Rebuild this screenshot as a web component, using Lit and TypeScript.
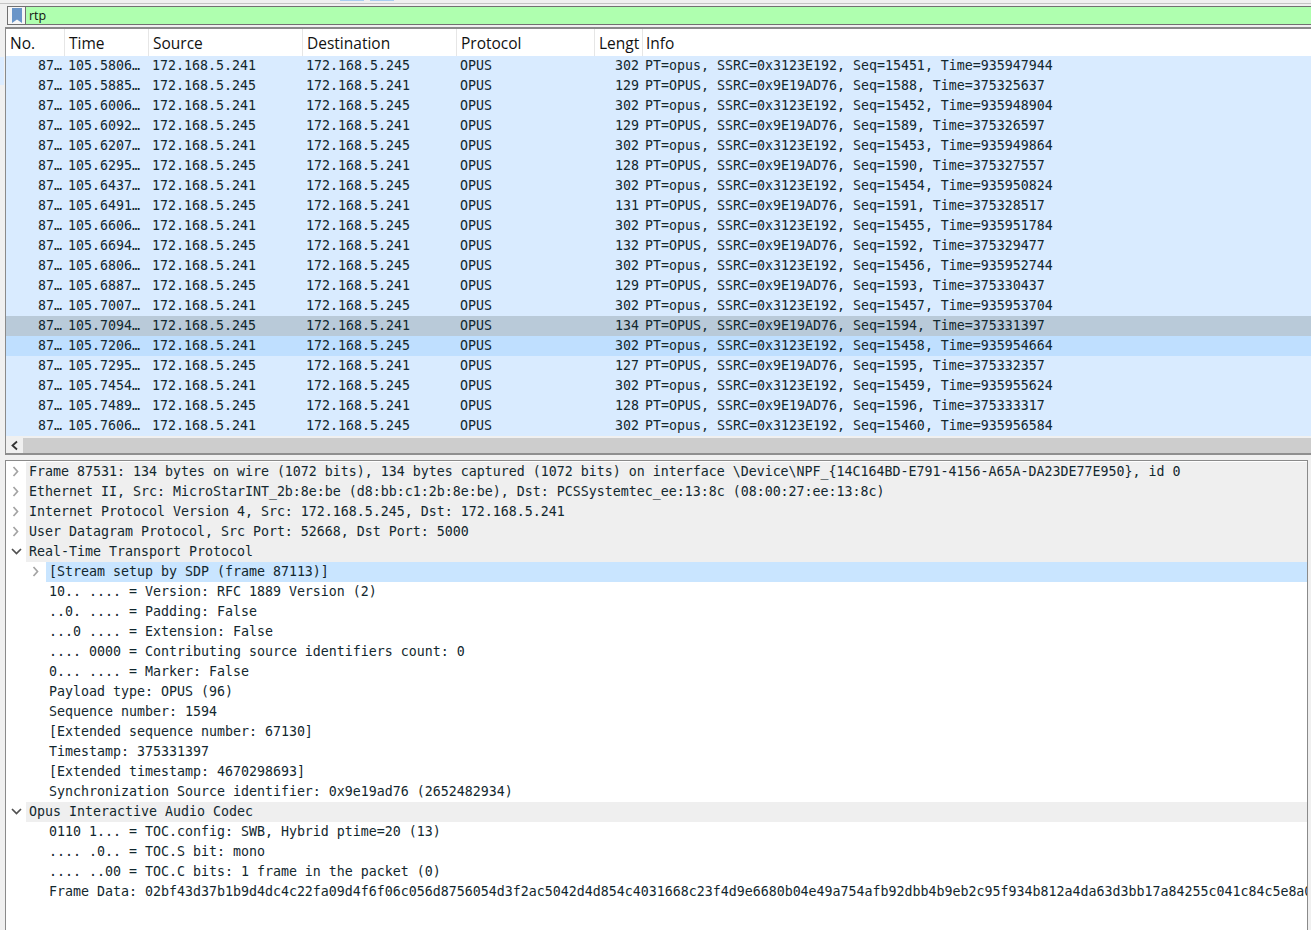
import { LitElement, html, css, svg } from "lit";
import { customElement } from "lit/decorators.js";

const A = ["172.168.5.241", "172.168.5.245"];
const rows: [string, number, number, number][] = [
  ["105.5806…", 302, 15451, 935947944],
  ["105.5885…", 129, 1588, 375325637],
  ["105.6006…", 302, 15452, 935948904],
  ["105.6092…", 129, 1589, 375326597],
  ["105.6207…", 302, 15453, 935949864],
  ["105.6295…", 128, 1590, 375327557],
  ["105.6437…", 302, 15454, 935950824],
  ["105.6491…", 131, 1591, 375328517],
  ["105.6606…", 302, 15455, 935951784],
  ["105.6694…", 132, 1592, 375329477],
  ["105.6806…", 302, 15456, 935952744],
  ["105.6887…", 129, 1593, 375330437],
  ["105.7007…", 302, 15457, 935953704],
  ["105.7094…", 134, 1594, 375331397],
  ["105.7206…", 302, 15458, 935954664],
  ["105.7295…", 127, 1595, 375332357],
  ["105.7454…", 302, 15459, 935955624],
  ["105.7489…", 128, 1596, 375333317],
  ["105.7606…", 302, 15460, 935956584],
];

type D = { t: string; k: "closed" | "open" | "subsel" | "plain" };
const details: D[] = [
  { t: "Frame 87531: 134 bytes on wire (1072 bits), 134 bytes captured (1072 bits) on interface \\Device\\NPF_{14C164BD-E791-4156-A65A-DA23DE77E950}, id 0", k: "closed" },
  { t: "Ethernet II, Src: MicroStarINT_2b:8e:be (d8:bb:c1:2b:8e:be), Dst: PCSSystemtec_ee:13:8c (08:00:27:ee:13:8c)", k: "closed" },
  { t: "Internet Protocol Version 4, Src: 172.168.5.245, Dst: 172.168.5.241", k: "closed" },
  { t: "User Datagram Protocol, Src Port: 52668, Dst Port: 5000", k: "closed" },
  { t: "Real-Time Transport Protocol", k: "open" },
  { t: "[Stream setup by SDP (frame 87113)]", k: "subsel" },
  { t: "10.. .... = Version: RFC 1889 Version (2)", k: "plain" },
  { t: "..0. .... = Padding: False", k: "plain" },
  { t: "...0 .... = Extension: False", k: "plain" },
  { t: ".... 0000 = Contributing source identifiers count: 0", k: "plain" },
  { t: "0... .... = Marker: False", k: "plain" },
  { t: "Payload type: OPUS (96)", k: "plain" },
  { t: "Sequence number: 1594", k: "plain" },
  { t: "[Extended sequence number: 67130]", k: "plain" },
  { t: "Timestamp: 375331397", k: "plain" },
  { t: "[Extended timestamp: 4670298693]", k: "plain" },
  { t: "Synchronization Source identifier: 0x9e19ad76 (2652482934)", k: "plain" },
  { t: "Opus Interactive Audio Codec", k: "open" },
  { t: "0110 1... = TOC.config: SWB, Hybrid ptime=20 (13)", k: "plain" },
  { t: ".... .0.. = TOC.S bit: mono", k: "plain" },
  { t: ".... ..00 = TOC.C bits: 1 frame in the packet (0)", k: "plain" },
  { t: "Frame Data: 02bf43d37b1b9d4dc4c22fa09d4f6f06c056d8756054d3f2ac5042d4d854c4031668c23f4d9e6680b04e49a754afb92dbb4b9eb2c95f934b812a4da63d3bb17a84255c041c84c5e8a0", k: "plain" },
];

const right = svg`<path d="M3.5 1 L7.5 5.5 L3.5 10" fill="none" stroke="#a4a4a4" stroke-width="1.7"/>`;
const down = svg`<path d="M1 3 L5.5 7.5 L10 3" fill="none" stroke="#505050" stroke-width="1.7"/>`;

@customElement("app-root")
export class AppRoot extends LitElement {
  static styles = css`
    :host { display: block; width: 1311px; height: 930px; overflow: hidden; background: #f0f0f0; position: relative; font-family: "DejaVu Sans Mono", "Liberation Mono", monospace; color: #1a1a1a; }
    .strip { height: 3px; display: flex; gap: 6px; padding-left: 340px; border-bottom: 1px solid #c4c4c4; }
    .strip i { width: 24px; height: 1px; background: #a8cdf0; }
    .edge { position: absolute; left: 0; top: 57px; width: 4px; height: 28px; background: #dcecff; }
    .filter { height: 17px; margin: 2px 0 0 7px; border: 1px solid #707070; border-width: 1px 0 1px 1px; background: #afffaf; display: flex; align-items: center; }
    .mark { width: 18px; height: 17px; background: #f6f6f6; border-right: 1px solid #707070; display: flex; align-items: center; justify-content: center; box-sizing: border-box; }
    .filter span { font: 12.5px "Open Sans", sans-serif; padding-left: 3px; color: #111; }
    .list { margin: 2px 0 0 5px; border-top: 2px solid #8a8a8a; border-left: 1px solid #8a8a8a; }
    .cols { display: grid; grid-template-columns: 58px 84px 154px 154px 138px 48px 1fr; }
    .head { height: 27px; background: #fff; font: 15.5px "Open Sans", sans-serif; color: #111; }
    .head div { padding: 3px 0 0 4px; line-height: 22px; height: 27px; border-left: 1px solid #e6e6e6; box-sizing: border-box; overflow: hidden; white-space: nowrap; }
    .head div:first-child { border-left: 0; }
    .head div:last-child { padding-left: 3px; }
    .row { height: 20px; line-height: 20px; font-size: 13.29px; background: #d9ebff; white-space: pre; color: #12272e; }
    .row div { padding-left: 4px; overflow: hidden; }
    .row .r { text-align: right; padding: 0 3px 0 0; }
    .row .r.no { padding-right: 2px; }
    .row .info { padding-left: 3px; }
    .row.sel { background: #b9cad9; }
    .row.rel { background: #bfdfff; }
    .bar { height: 15px; margin: 2px 0 0 0; background: #cdcdcd; display: flex; border-bottom: 2px solid #8f8f8f; }
    .arrow { width: 17px; height: 15px; background: #f0f0f0; display: flex; align-items: center; justify-content: center; }
    .details { margin: 5px 3px 0 5px; height: 469px; padding-top: 1px; border: 1px solid #8a8a8a; border-bottom: 0; background: #fff; overflow: hidden; font-size: 13.29px; color: #12272e; }
    .d { height: 20px; line-height: 20px; position: relative; }
    .d span { white-space: pre; }
    .d.closed, .d.open { background: #efefef; margin-left: 20px; padding-left: 3px; }
    .d.plain { padding-left: 43px; }
    .d.subsel { background: #c9e5ff; margin-left: 40px; padding-left: 3px; }
    .d svg { position: absolute; top: 4px; width: 11px; height: 11px; }
    .d.closed svg { left: -16px; }
    .d.open svg { left: -15px; }
    .d.subsel svg { left: -16px; }
  `;

  render() {
    return html`
      <div class="strip"><i></i><i></i></div>
      <div class="edge"></div>
      <div class="filter">
        <div class="mark"><svg width="10" height="15" viewBox="0 0 10 15"><path d="M0 0H10V15L5 11.5L0 15Z" fill="#6a95c8"/></svg></div>
        <span>rtp</span>
      </div>
      <div class="list">
        <div class="cols head">
          <div>No.</div><div>Time</div><div>Source</div><div>Destination</div><div>Protocol</div><div>Lengt</div><div>Info</div>
        </div>
        ${rows.map((r, i) => {
          const odd = i % 2;
          const isOpus = r[1] === 302;
          const cls = i === 13 ? "sel" : i === 14 ? "rel" : "";
          return html`<div class="cols row ${cls}">
            <div class="r no">87…</div>
            <div>${r[0]}</div>
            <div>${A[odd]}</div>
            <div>${A[1 - odd]}</div>
            <div>OPUS</div>
            <div class="r">${r[1]}</div>
            <div class="info">${isOpus ? `PT=opus, SSRC=0x3123E192` : `PT=OPUS, SSRC=0x9E19AD76`}, Seq=${r[2]}, Time=${r[3]}</div>
          </div>`;
        })}
        <div class="bar"><div class="arrow"><svg width="9" height="11" viewBox="0 0 9 11"><path d="M7 1.5L2.5 5.5L7 9.5" fill="none" stroke="#333" stroke-width="1.8"/></svg></div></div>
      </div>
      <div class="details">
        ${details.map((d) => html`<div class="d ${d.k}">
          ${d.k === "closed" || d.k === "subsel" ? html`<svg viewBox="0 0 11 11">${right}</svg>` : ""}
          ${d.k === "open" ? html`<svg viewBox="0 0 11 11">${down}</svg>` : ""}
          <span>${d.t}</span>
        </div>`)}
      </div>
    `;
  }
}
